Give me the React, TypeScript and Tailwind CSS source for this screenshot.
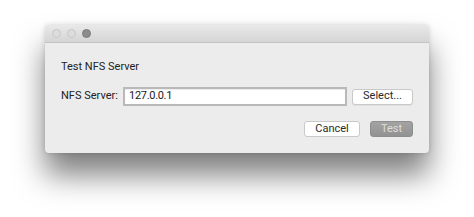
import React from "react";

export default function App() {
  const font = { fontFamily: 'Roboto, "Liberation Sans", Arial, sans-serif' };
  return (
    <div className="w-[474px] h-[217px] bg-white overflow-hidden pt-[25px] pl-[45px]" style={font}>
      <div className="w-[384px] h-[128px] bg-[#ececec] rounded-[4px] shadow-[0_22px_30px_rgba(0,0,0,0.5),0_0_5px_rgba(0,0,0,0.15)] flex flex-col overflow-hidden">
        <div className="h-[18px] shrink-0 bg-gradient-to-b from-[#e9e9e9] to-[#d5d5d5] border-b border-[#c3c3c3] flex items-center pl-[7px] gap-[6px]">
          <div className="w-[9px] h-[9px] rounded-full bg-[#dcdcdc] border border-[#c6c6c6]" />
          <div className="w-[9px] h-[9px] rounded-full bg-[#dcdcdc] border border-[#c6c6c6]" />
          <div className="w-[9px] h-[9px] rounded-full bg-[#8c8c8c] border border-[#7c7c7c]" />
        </div>
        <div className="flex flex-col px-4 pt-[17px] text-[11px] text-[#222222]">
          <div className="leading-[14px] h-[14px]">Test NFS Server</div>
          <div className="mt-[13px] h-[19px] flex items-center">
            <span className="w-[62px] shrink-0">NFS Server:</span>
            <div className="w-[224px] h-[19px] bg-white border-[2px] border-[#b9b9b9] flex items-center pl-[4px] tracking-[-0.3px] text-[#1a1a1a] shadow-[inset_0_1px_1px_rgba(0,0,0,0.08)]">
              127.0.0.1
            </div>
            <div className="ml-[5px] w-[61px] h-[16px] bg-white border border-[#c9c9c9] rounded-[3px] flex items-center justify-center text-[#2a2a2a] shadow-[0_1px_0_rgba(0,0,0,0.05)]">
              Select...
            </div>
          </div>
          <div className="mt-[15px] h-[16px] flex justify-end gap-[10px]">
            <div className="w-[56px] h-[16px] bg-white border border-[#c9c9c9] rounded-[3px] flex items-center justify-center text-[#2a2a2a]">
              Cancel
            </div>
            <div className="w-[43px] h-[16px] bg-gradient-to-b from-[#a3a3a3] to-[#929292] border border-[#8e8e8e] rounded-[3px] flex items-center justify-center text-[#dedede]">
              Test
            </div>
          </div>
        </div>
      </div>
    </div>
  );
}
